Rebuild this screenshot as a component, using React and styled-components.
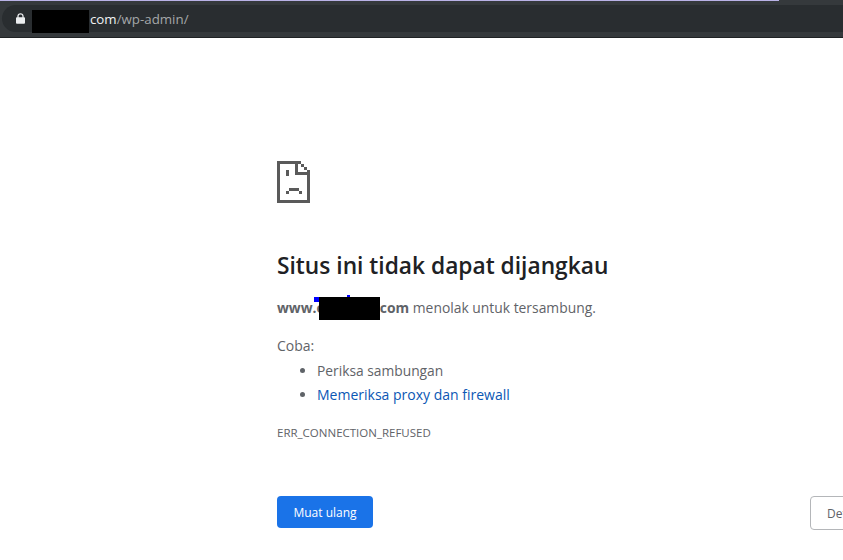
import React from 'react';
import styled, { createGlobalStyle } from 'styled-components';

const GlobalStyle = createGlobalStyle`
  html, body {
    margin: 0;
    padding: 0;
    height: 100%;
    background: #fff;
    overflow: hidden;
  }
  body {
    font-family: "Open Sans", "Noto Sans", "Liberation Sans", sans-serif;
  }
`;

const Page = styled.div`
  width: 843px;
  height: 560px;
  position: relative;
  overflow: hidden;
  display: flex;
  flex-direction: column;
`;

// Browser chrome
const Toolbar = styled.header`
  height: 38px;
  box-sizing: border-box;
  background: #35393c;
  border-bottom: 1px solid #1f2224;
`;

const AccentStrip = styled.div`
  width: 779px;
  height: 1px;
  margin-bottom: 4px;
  background: #b9b2e6;
`;

const Omnibox = styled.div`
  height: 27px;
  display: flex;
  align-items: center;
  padding-left: 14px;
  margin-left: 2px;
  background: #292d30;
  border-radius: 14px 0 0 14px;
`;

const LockIcon = styled.svg`
  width: 9px;
  height: 11px;
  margin-right: 16px;
  flex: none;
`;

const Url = styled.div`
  font-size: 13.3px;
  color: #a4a7a9;
  padding-left: 49px;
  position: relative;
  top: 0.5px;
`;

const UrlHost = styled.span`
  color: #f1f3f4;
`;

// Error page
const Content = styled.main`
  padding: 123px 0 0 277px;
  width: 360px;
  display: flex;
  flex-direction: column;
  color: #5f6368;
`;

const SadIcon = styled.svg`
  width: 33px;
  height: 42px;
  display: block;
  margin-bottom: 45px;
`;

const Title = styled.h1`
  margin: 0 0 12px;
  font-size: 22.75px;
  line-height: 36px;
  font-weight: 600;
  color: #202124;
  white-space: nowrap;
`;

const Message = styled.p`
  margin: 0 0 14px;
  font-size: 13.87px;
  line-height: 24px;
  white-space: nowrap;
`;

const TryLabel = styled.div`
  font-size: 14px;
  line-height: 24px;
`;

const Suggestions = styled.ul`
  margin: 1px 0 18px;
  padding-left: 40px;
  font-size: 14px;
  line-height: 24px;
`;

const Suggestion = styled.li`
  white-space: nowrap;
`;

const SuggestionText = styled.span`
  font-size: 13.8px;
`;

const SuggestionLink = styled.a`
  color: #0b57b4;
  text-decoration: none;
`;

const ErrorCode = styled.div`
  font-size: 11.5px;
  line-height: 16px;
  color: #5f6368;
  margin-bottom: 55px;
`;

const ReloadButton = styled.button`
  width: 96px;
  height: 32px;
  padding: 0;
  border: none;
  border-radius: 4px;
  background: #1a73e8;
  color: #fff;
  font-family: inherit;
  font-size: 12px;
  cursor: pointer;
`;

const DetailsButton = styled.button`
  position: absolute;
  left: 810px;
  top: 496px;
  width: 96px;
  height: 34px;
  box-sizing: border-box;
  padding: 0 0 0 16px;
  text-align: left;
  border: 1px solid #b4b6b9;
  border-radius: 4px;
  background: #fff;
  color: #5f6368;
  font-family: inherit;
  font-size: 12px;
`;

// Redacted hostnames, painted over the screenshot's text
const Redaction = styled.div`
  position: absolute;
  left: ${(p) => p.$left}px;
  top: ${(p) => p.$top}px;
  width: ${(p) => p.$width}px;
  height: ${(p) => p.$height}px;
  background: ${(p) => p.$color || '#000'};
`;

const App = () => (
  <Page>
    <GlobalStyle />
    <Toolbar>
      <AccentStrip />
      <Omnibox>
        <LockIcon viewBox="0 0 10 12">
          <path
            fill="#eceef0"
            d="M1.5 4.5V3.4C1.5 1.5 3 .3 5 .3s3.5 1.2 3.5 3.1v1.1H9c.6 0 1 .4 1 1v5.2c0 .6-.4 1-1 1H1c-.6 0-1-.4-1-1V5.500c0-.6.4-1 1-1h.5zM2.900 4.500h4.200V3.400C7.100 2.300 6.200 1.600 5 1.600s-2.100.7-2.100 1.800v1.100z"
          />
        </LockIcon>
        <Url>
          <UrlHost>com</UrlHost>/wp-admin/
        </Url>
      </Omnibox>
    </Toolbar>
    <Content>
      <SadIcon viewBox="0 0 33 42" shapeRendering="crispEdges">
        <path
          fill="#5a5a5a"
          d="M0 0h21v3H3v36h27V12h3v30H0zM18 3h3v8h9v3H18zM21 0h3v3h3v3h3v3h3v3h-3V9h-3V6h-3V3h-3zM9 9h3v6H9zM9 30h3v3H9zM12 27h10v3H12zM22 30h3v3h-3z"
        />
      </SadIcon>
      <Title>Situs ini tidak dapat dijangkau</Title>
      <Message>
        <b>www.example.com</b> menolak untuk tersambung.
      </Message>
      <TryLabel>Coba:</TryLabel>
      <Suggestions>
        <Suggestion>
          <SuggestionText>Periksa sambungan</SuggestionText>
        </Suggestion>
        <Suggestion>
          <SuggestionLink href="#">Memeriksa proxy dan firewall</SuggestionLink>
        </Suggestion>
      </Suggestions>
      <ErrorCode>ERR_CONNECTION_REFUSED</ErrorCode>
      <div>
        <ReloadButton>Muat ulang</ReloadButton>
      </div>
    </Content>
    <DetailsButton>Detail</DetailsButton>
    <Redaction $left={32} $top={10} $width={57} $height={23} />
    <Redaction $left={314} $top={297} $width={6} $height={5} $color="#0000ff" />
    <Redaction $left={347} $top={295} $width={3} $height={2} $color="#0000ff" />
    <Redaction $left={319} $top={297} $width={61} $height={23} />
  </Page>
);

export default App;
